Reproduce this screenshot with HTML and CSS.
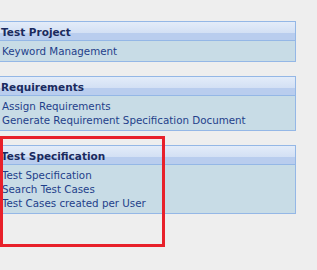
FILE: index.html
```html
<!DOCTYPE html>
<html>
	<head>
		<meta charset="UTF-8">
		<title>Main menu</title>
		<link rel="stylesheet" href="styles.css">
	</head>
	<body>
		<div class="menu">
			<div class="block">
				<div class="title">Test Project</div>
				<div class="links">
					<a href="#">Keyword Management</a>
				</div>
			</div>
			<div class="block">
				<div class="title">Requirements</div>
				<div class="links">
					<a href="#">Assign Requirements</a>
					<a href="#">Generate Requirement Specification Document</a>
				</div>
			</div>
			<div class="block">
				<div class="title">Test Specification</div>
				<div class="links">
					<a href="#">Test Specification</a>
					<a href="#">Search Test Cases</a>
					<a href="#">Test Cases created per User</a>
				</div>
			</div>
		</div>
		<!-- highlight box -->
		<div class="mark"></div>
	</body>
</html>
```
FILE: styles.css
```css
*{
	margin: 0;
	padding: 0;
}

body{
	background: #eeeeee;
	font: 10.3px/14px "DejaVu Sans", Tahoma, sans-serif;
	overflow: hidden;
}

a{
	text-decoration: none;
}

.menu{
	padding-top: 21px;
	width: 297px;
	margin-left: -1px;
	display: flex;
	flex-direction: column;
	gap: 14px;
}

.block{
	border: 1px solid #94b7e6;
}

.block .title{
	height: 18px;
	line-height: 21px;
	padding-left: 1px;
	border-bottom: 1px solid #94b7e6;
	background: linear-gradient(#e3ecf9, #d3e0f4 60%, #b9cdee 61%, #b9cdee);
	color: #1a2a5e;
	font-weight: bold;
	font-size: 10.5px;
}

.block .links{
	background: #c8dce6;
	padding: 3px 0 3px 2px;
}

.block .links a{
	display: block;
	color: #1f3f8a;
}

.mark{
	position: absolute;
	left: 0;
	top: 136px;
	width: 159px;
	height: 105px;
	border: 3px solid #e8202a;
}
```
